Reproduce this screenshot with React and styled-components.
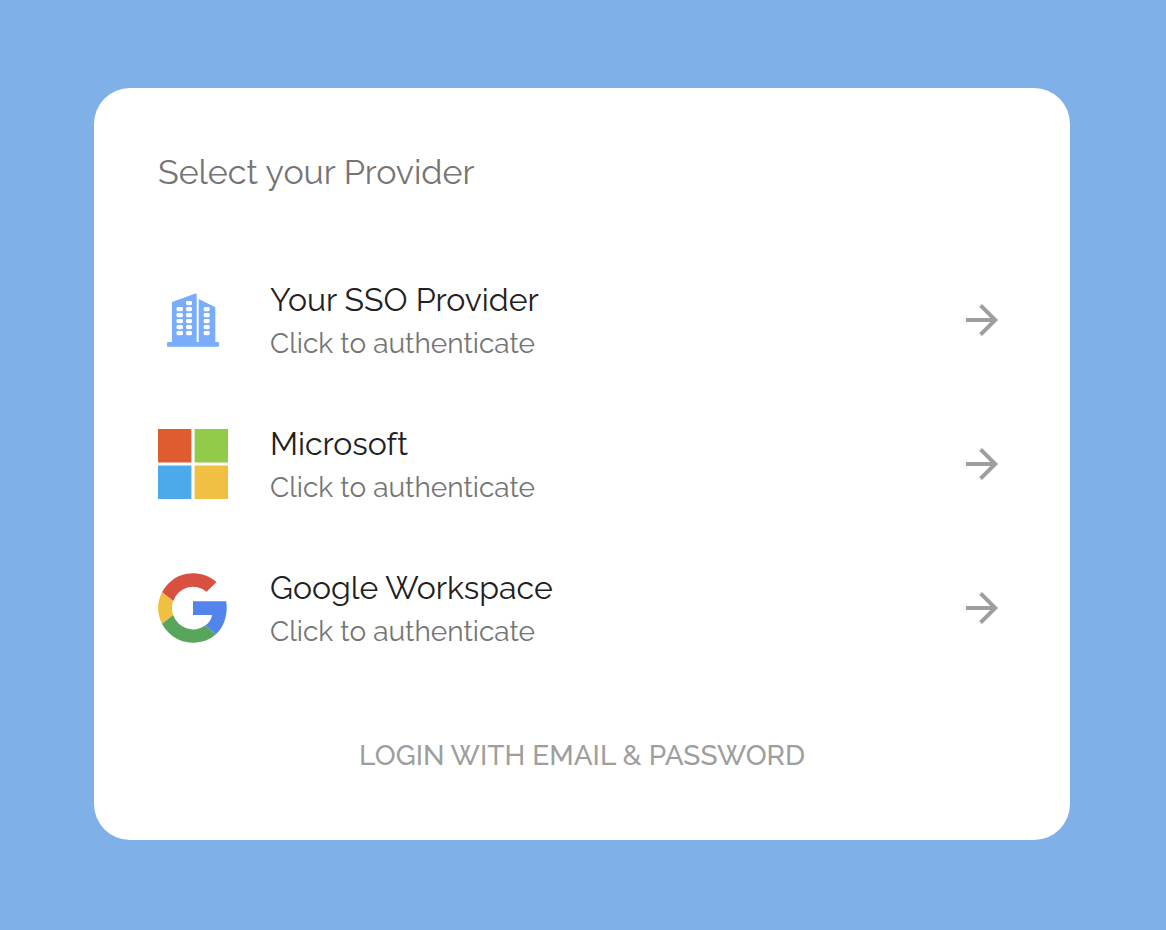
import styled, { createGlobalStyle } from "styled-components";

const providers = [
  { name: "Your SSO Provider", Icon: BuildingIcon },
  { name: "Microsoft", Icon: MicrosoftIcon },
  { name: "Google Workspace", Icon: GoogleIcon },
];

export default function App() {
  return (
    <>
      <GlobalStyle />
      <StyledPage>
        <StyledCard>
          <StyledTitle>Select your Provider</StyledTitle>
          <StyledList>
            {providers.map(({ name, Icon }) => (
              <li key={name}>
                <StyledProvider type="button">
                  <Icon />
                  <StyledText>
                    <StyledName>{name}</StyledName>
                    <StyledHint>Click to authenticate</StyledHint>
                  </StyledText>
                  <ArrowIcon />
                </StyledProvider>
              </li>
            ))}
          </StyledList>
          <StyledLogin type="button">Login with email &amp; password</StyledLogin>
        </StyledCard>
      </StyledPage>
    </>
  );
}

/* Windows are listed per column: x, width and the y of the top one */
const windowColumns = [
  { x: 18.5, width: 6.5, ys: [22, 28, 34, 40, 46] },
  { x: 28, width: 6, ys: [16, 22, 28, 34, 40, 46] },
  { x: 45.7, width: 6, ys: [22, 28, 34, 40, 46] },
];

function BuildingIcon() {
  return (
    <StyledLogo viewBox="0 0 70 70" aria-hidden="true">
      <g fill="#79acf9">
        <path d="M14 17 37.5 8.6Q38.7 8.2 38.7 9.5V58H14Z" />
        <path d="M40.7 14 57.3 22.3V58H40.7Z" />
        <rect x="38" y="57" width="3" height="3" />
        <rect x="9" y="57" width="52" height="4.8" rx="1" />
      </g>
      <g fill="#fff">
        {windowColumns.map(({ x, width, ys }) =>
          ys.map((y) => (
            <rect
              key={`${x}-${y}`}
              x={x}
              y={y}
              width={width}
              height="4.2"
              rx="1.4"
            />
          ))
        )}
      </g>
    </StyledLogo>
  );
}

function MicrosoftIcon() {
  return (
    <StyledLogo viewBox="0 0 70 70" aria-hidden="true">
      <path fill="#df5c30" d="M0 0h33.4v33.4H0z" />
      <path fill="#92ca49" d="M36.6 0H70v33.4H36.6z" />
      <path fill="#4ca9ea" d="M0 36.6h33.4V70H0z" />
      <path fill="#f1bf43" d="M36.6 36.6H70V70H36.6z" />
    </StyledLogo>
  );
}

function GoogleIcon() {
  return (
    <StyledLogo viewBox="0 0 70 70" aria-hidden="true">
      <path
        fill="#d85140"
        d="M4 19.3A35 35 0 0 1 58.5 9L48.6 18.8A21 21 0 0 0 15.2 28Z"
      />
      <path
        fill="#f1bf42"
        d="M4 19.3A35 35 0 0 0 4 50.7L15.2 42A21 21 0 0 1 15.2 28Z"
      />
      <path
        fill="#58a55c"
        d="M4 50.7A35 35 0 0 0 58 61.2L47.2 52.6A21 21 0 0 1 15.2 42Z"
      />
      <path
        fill="#5384ec"
        d="M35 28.3H68.3C69.8 40 67.5 52.5 58 61.2L47.2 52.6C51 50 53.4 46.3 54.2 42H35Z"
      />
    </StyledLogo>
  );
}

function ArrowIcon() {
  return (
    <StyledArrow viewBox="0 0 24 24" aria-hidden="true">
      <path d="m12 4-1.41 1.41L16.17 11H4v2h12.17l-5.58 5.59L12 20l8-8z" />
    </StyledArrow>
  );
}

const GlobalStyle = createGlobalStyle`
  * {
    box-sizing: border-box;
  }
  body {
    margin: 0;
    background-color: #7fb0e8;
    font-family: Raleway, Lato, sans-serif;
  }
  button {
    padding: 0;
    border: none;
    background: none;
    font-family: inherit;
    cursor: pointer;
  }
`;

const StyledPage = styled.main`
  min-height: 100vh;
  padding: 88px 96px 88px 94px;
`;

const StyledCard = styled.section`
  display: flex;
  flex-direction: column;
  gap: 56px;
  padding: 64px;
  border-radius: 36px;
  background-color: #fff;
`;

const StyledTitle = styled.h1`
  margin: 0;
  color: #757575;
  font-size: 34px;
  font-weight: 400;
  line-height: 40px;
`;

const StyledList = styled.ul`
  margin: 0;
  padding: 0;
  list-style: none;
`;

const StyledProvider = styled.button`
  display: flex;
  align-items: center;
  gap: 42px;
  width: 100%;
  height: 144px;
  text-align: left;
`;

const StyledText = styled.span`
  display: flex;
  flex: 1;
  flex-direction: column;
  padding-top: 4px;
  line-height: 44px;
`;

const StyledName = styled.span`
  color: #212121;
  font-size: 32px;
`;

const StyledHint = styled.span`
  color: #757575;
  font-size: 28px;
`;

const StyledLogin = styled.button`
  align-self: center;
  color: #9e9e9e;
  font-size: 28px;
  font-weight: 500;
  line-height: 40px;
  text-transform: uppercase;
`;

const StyledLogo = styled.svg`
  flex: none;
  width: 70px;
  height: 70px;
`;

const StyledArrow = styled.svg`
  flex: none;
  width: 48px;
  height: 48px;
  fill: #9e9e9e;
`;
